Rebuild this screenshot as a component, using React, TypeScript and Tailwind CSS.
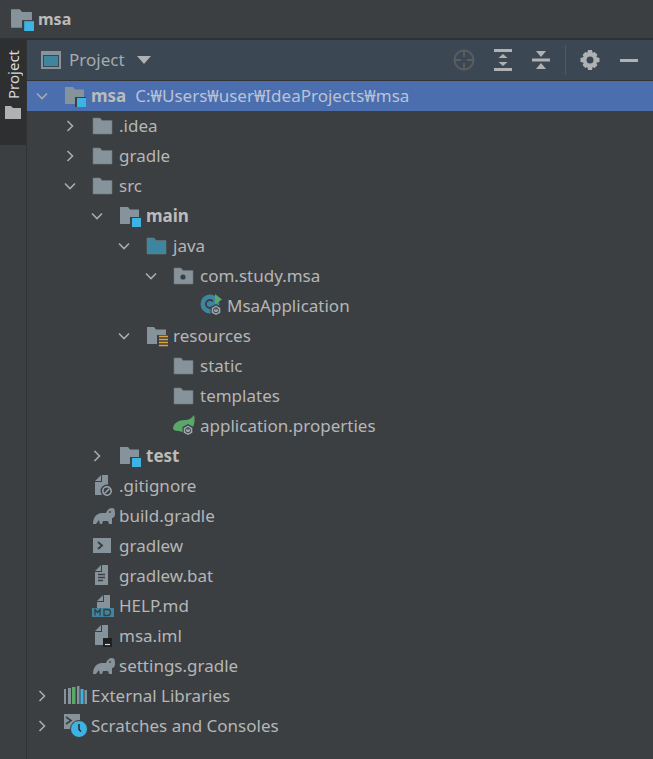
import type { ReactNode } from 'react';

const FOLDER = 'M0 1h7l2 2.5h10V17H0z';

function Folder({ color = '#87939a', dot = false }: { color?: string; dot?: boolean }) {
  return (
    <svg width="22" height="22" viewBox="0 0 22 22">
      <path d={FOLDER} transform="translate(1 2)" fill={color} stroke="#6d767c" strokeWidth="0.6" />
      {dot && <circle cx="10" cy="12" r="2.6" fill="#3c3f41" />}
    </svg>
  );
}

function ModuleFolder({ size = 22 }: { size?: number }) {
  return (
    <svg width={size} height={size} viewBox="0 0 22 22">
      <path d="M0 1h7l2 2.5h10V17H10v-3H0z" transform="translate(1 2)" fill="#87939a" />
      <path d="M1 2h8l2 2.5h9V19H1z" fill="#87939a" />
      <rect x="11" y="12" width="11" height="10" fill="#3c3f41" />
      <rect x="13" y="13" width="9" height="9" fill="#3db3e4" />
    </svg>
  );
}

function JavaFolder() {
  return <Folder color="#3e86a0" />;
}

function ResourcesFolder() {
  return (
    <svg width="22" height="22" viewBox="0 0 22 22">
      <path d="M1 2h7l2 2.5h10V19H1z" fill="#87939a" />
      <rect x="11" y="10" width="11" height="12" fill="#3c3f41" />
      <path d="M13 11.5h9M13 14.5h9M13 17.500h9M13 20.500h9" stroke="#d9a343" strokeWidth="1.5" />
    </svg>
  );
}

function SpringBadge({ x, y }: { x: number; y: number }) {
  return (
    <g transform={`translate(${x} ${y})`}>
      <path d="M6 0l5.500 3v6L6 12.500 .5 9V3z" fill="#3c3f41" />
      <path d="M6 1.500l4.300 2.400v4.800L6 11 1.700 8.700V3.900z" fill="#9aa7b0" />
      <circle cx="6" cy="6.300" r="2.500" fill="none" stroke="#3c3f41" strokeWidth="1" />
      <path d="M6 3.500v2.500" stroke="#3c3f41" strokeWidth="1" />
    </g>
  );
}

function SpringClass() {
  return (
    <svg width="24" height="24" viewBox="0 0 24 24">
      <circle cx="10" cy="10" r="9.500" fill="#3e86a0" />
      <path d="M13 7.500a4 4 0 1 0 0 5" fill="none" stroke="#3c3f41" strokeWidth="1.800" />
      <path d="M15 0l7 5.500-7 5z" fill="#59a869" />
      <SpringBadge x={10} y={10} />
    </svg>
  );
}

function SpringProps() {
  return (
    <svg width="24" height="24" viewBox="0 0 24 24">
      <path d="M0 15c0-6 6-9 12-9 4 0 7-2 9-5 2 7-1 17-8 17-3 0-5 0-7-1-2 0-4 0-6-2z" fill="#59a869" />
      <SpringBadge x={9} y={10} />
    </svg>
  );
}

function FileShape({ children }: { children?: ReactNode }) {
  return (
    <svg width="22" height="22" viewBox="0 0 22 22">
      <path d="M10 0h6v20H3V7l7 0z M3 6l6-6v6z" fill="#87939a" />
      {children}
    </svg>
  );
}

function IgnoreFile() {
  return (
    <FileShape>
      <circle cx="15" cy="16" r="6.500" fill="#3c3f41" />
      <circle cx="15" cy="16" r="4.200" fill="none" stroke="#9aa7b0" strokeWidth="1.500" />
      <path d="M12.500 18.500l5-5" stroke="#9aa7b0" strokeWidth="1.500" />
    </FileShape>
  );
}

function TextFile() {
  return (
    <FileShape>
      <path d="M6 9.500h7M6 12.500h7M6 15.500h5" stroke="#3c3f41" strokeWidth="1.300" />
    </FileShape>
  );
}

function ElephantIcon() {
  return (
    <svg width="24" height="22" viewBox="0 0 24 22">
      <path
        d="M1 19c0-6 3-11 9-11h4c1-3 3-5 6-5 3 0 3 3 3 6 0 2-1 4-3 4v6h-3l-1-3h-5l-1 3H8l-1-4-3 4z"
        fill="#87939a"
      />
      <circle cx="18" cy="7" r="0.900" fill="#3c3f41" />
    </svg>
  );
}

function ShellFile() {
  return (
    <svg width="22" height="22" viewBox="0 0 22 22">
      <rect x="1" y="3" width="18" height="15" fill="#87939a" />
      <path d="M6 7l4 3.500-4 3.500" fill="none" stroke="#3c3f41" strokeWidth="2" />
    </svg>
  );
}

function MdFile() {
  return (
    <svg width="26" height="24" viewBox="0 0 26 24">
      <path d="M12 1h6v14H5V8h7z M5 7l6-6v6z" fill="#87939a" />
      <rect x="0" y="14" width="22" height="9" fill="#3e86a0" />
      <path d="M3 21.500v-6l2.500 3 2.500-3v6M12 15.500v6h3.500a3 3 0 0 0 0-6z" fill="none" stroke="#3c3f41" strokeWidth="1.300" />
    </svg>
  );
}

function ImlFile() {
  return (
    <FileShape>
      <rect x="11" y="13" width="9" height="9" fill="#1f2022" />
      <path d="M13 19.500h5" stroke="#d8d8d8" strokeWidth="1.200" />
    </FileShape>
  );
}

function LibrariesIcon() {
  return (
    <svg width="24" height="22" viewBox="0 0 24 22">
      <rect x="0" y="4" width="2" height="15" fill="#87939a" />
      <rect x="4" y="3" width="3" height="16" fill="#87939a" />
      <rect x="8" y="2" width="3.500" height="17" fill="#59a869" />
      <rect x="13" y="1" width="2.500" height="18" fill="#87939a" />
      <rect x="16.500" y="4" width="3" height="15" fill="#3db3e4" />
      <rect x="20.500" y="5" width="2.500" height="14" fill="#87939a" />
    </svg>
  );
}

function ScratchesIcon() {
  return (
    <svg width="24" height="24" viewBox="0 0 24 24">
      <rect x="0" y="0" width="16" height="15" fill="#87939a" />
      <path d="M2 3l5 3.500-5 3.500" fill="none" stroke="#3c3f41" strokeWidth="1.600" />
      <circle cx="15" cy="15" r="8.500" fill="#3db3e4" stroke="#3c3f41" strokeWidth="1" />
      <path d="M15 10v5.500l2 2" fill="none" stroke="#1f2a33" strokeWidth="1.500" />
    </svg>
  );
}

function Chevron({ open }: { open: boolean }) {
  return (
    <svg width="12" height="12" viewBox="0 0 12 12" className="shrink-0">
      <path
        d={open ? 'M1 3.500l5 5 5-5' : 'M3.500 1l5 5-5 5'}
        fill="none"
        stroke="#a9acae"
        strokeWidth="1.600"
      />
    </svg>
  );
}

type Row = {
  label: string;
  icon: ReactNode;
  indent: string;
  open?: boolean;
  bold?: boolean;
  hint?: string;
  selected?: boolean;
};

const rows: Row[] = [
  { label: 'msa', icon: <ModuleFolder />, indent: 'pl-[9px]', open: true, bold: true, hint: 'C:₩Users₩user₩IdeaProjects₩msa', selected: true },
  { label: '.idea', icon: <Folder />, indent: 'pl-[37px]', open: false },
  { label: 'gradle', icon: <Folder />, indent: 'pl-[37px]', open: false },
  { label: 'src', icon: <Folder />, indent: 'pl-[37px]', open: true },
  { label: 'main', icon: <ModuleFolder />, indent: 'pl-[64px]', open: true, bold: true },
  { label: 'java', icon: <JavaFolder />, indent: 'pl-[91px]', open: true },
  { label: 'com.study.msa', icon: <Folder dot />, indent: 'pl-[118px]', open: true },
  { label: 'MsaApplication', icon: <SpringClass />, indent: 'pl-[145px]' },
  { label: 'resources', icon: <ResourcesFolder />, indent: 'pl-[91px]', open: true },
  { label: 'static', icon: <Folder />, indent: 'pl-[118px]' },
  { label: 'templates', icon: <Folder />, indent: 'pl-[118px]' },
  { label: 'application.properties', icon: <SpringProps />, indent: 'pl-[118px]' },
  { label: 'test', icon: <ModuleFolder />, indent: 'pl-[64px]', open: false, bold: true },
  { label: '.gitignore', icon: <IgnoreFile />, indent: 'pl-[37px]' },
  { label: 'build.gradle', icon: <ElephantIcon />, indent: 'pl-[37px]' },
  { label: 'gradlew', icon: <ShellFile />, indent: 'pl-[37px]' },
  { label: 'gradlew.bat', icon: <TextFile />, indent: 'pl-[37px]' },
  { label: 'HELP.md', icon: <MdFile />, indent: 'pl-[37px]' },
  { label: 'msa.iml', icon: <ImlFile />, indent: 'pl-[37px]' },
  { label: 'settings.gradle', icon: <ElephantIcon />, indent: 'pl-[37px]' },
  { label: 'External Libraries', icon: <LibrariesIcon />, indent: 'pl-[9px]', open: false },
  { label: 'Scratches and Consoles', icon: <ScratchesIcon />, indent: 'pl-[9px]', open: false },
];

function TreeRow({ row }: { row: Row }) {
  return (
    <div className={`flex h-[30px] items-center ${row.indent} ${row.selected ? 'bg-[#4b6eaf]' : ''}`}>
      <div className="flex w-[28px] shrink-0 items-center">
        {row.open !== undefined && <Chevron open={row.open} />}
      </div>
      <div className="flex w-[27px] shrink-0 items-center">{row.icon}</div>
      <span className={row.bold ? 'font-bold text-[#bbbbbb]' : 'text-[#b4b6b8]'}>{row.label}</span>
      {row.hint && <span className="ml-[9px] text-[#b9c3d6]">{row.hint}</span>}
    </div>
  );
}

function ToolbarIcons() {
  return (
    <div className="ml-auto flex items-center">
      <svg width="24" height="24" viewBox="0 0 24 24" className="mr-[17px]">
        <circle cx="12" cy="12" r="9.500" fill="none" stroke="#5a5d5f" strokeWidth="2" />
        <path d="M12 2v7M12 15v7M2 12h7M15 12h7" stroke="#5a5d5f" strokeWidth="2" />
      </svg>
      <svg width="20" height="24" viewBox="0 0 20 24" className="mr-[18px]">
        <path d="M1 2.500h18M1 21.500h18" stroke="#afb1b3" strokeWidth="3" />
        <path d="M10 6l4.500 4h-9zM10 18l-4.500-4h9z" fill="#afb1b3" />
      </svg>
      <svg width="20" height="24" viewBox="0 0 20 24" className="mr-[14px]">
        <path d="M1 12h18" stroke="#afb1b3" strokeWidth="3" />
        <path d="M10 9L5 3h10zM10 15l5 6H5z" fill="#afb1b3" />
      </svg>
      <div className="mr-[14px] h-[30px] w-px bg-[#53585c]" />
      <svg width="20" height="20" viewBox="0 0 20 20" className="mr-[20px]">
        <path
          d="M8 0h4l.6 2.800 2-.9 2.800 2.800-1.100 2.300L19.500 8v4l-3.200.8 1.100 2.500-2.800 2.800-2-1L12 20H8l-.6-2.900-2 1-2.800-2.800 1.100-2.500L.5 12V8l3.200-1L2.600 4.700l2.800-2.800 2 .9z"
          fill="#afb1b3"
        />
        <circle cx="10" cy="10" r="3.500" fill="#3c4754" />
      </svg>
      <div className="mr-[15px] h-[3px] w-[18px] bg-[#afb1b3]" />
    </div>
  );
}

export default function App() {
  return (
    <div className="flex h-[759px] w-[653px] flex-col overflow-hidden bg-[#3c3f41] text-[17px] font-['Noto_Sans',sans-serif]">
      {/* Title */}
      <div className="flex h-[38px] shrink-0 items-center gap-[4px] pl-[10px]">
        <ModuleFolder size={24} />
        <span className="text-[16px] font-bold text-[#bbbbbb]">msa</span>
      </div>

      <div className="flex min-h-0 flex-1 border-t-2 border-[#2f3132]">
        {/* Tool strip */}
        <div className="w-[27px] shrink-0 border-r border-[#323232]">
          <div className="flex h-[105px] flex-col items-center bg-[#2d2f30] pt-[10px]">
            <span className="text-[15px] leading-[24px] text-[#d8d8d8] [writing-mode:vertical-rl] rotate-180">Project</span>
            <svg width="18" height="16" viewBox="0 0 18 16" className="mt-[6px]">
              <path d="M1 1h6l2 2h8v11H1z" fill="#afb1b3" />
            </svg>
          </div>
        </div>

        <div className="min-w-0 flex-1">
          {/* Toolbar */}
          <div className="flex h-[41px] items-center border-b border-[#323232] bg-[#3c4754] pl-[13px]">
            <svg width="22" height="22" viewBox="0 0 22 22">
              <rect x="1" y="2" width="20" height="18" fill="#8a9299" />
              <rect x="3" y="6" width="16" height="12" fill="#3c4754" />
              <rect x="4" y="7" width="14" height="10" fill="#3e86a0" />
            </svg>
            <span className="ml-[7px] text-[#a7aaad]">Project</span>
            <svg width="14" height="8" viewBox="0 0 14 8" className="ml-[12px]">
              <path d="M0 0h14L7 8z" fill="#afb1b3" />
            </svg>
            <ToolbarIcons />
          </div>

          {/* Tree */}
          <div>
            {rows.map((row) => (
              <TreeRow key={row.label + row.indent} row={row} />
            ))}
          </div>
        </div>
      </div>
    </div>
  );
}
